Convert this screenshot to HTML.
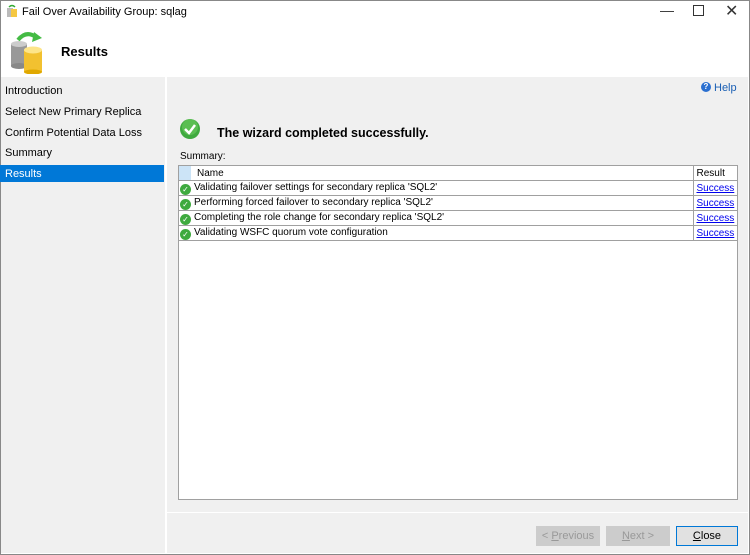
<!DOCTYPE html><html><head><style>
body{margin:0;width:750px;height:555px;overflow:hidden;font-family:"Liberation Sans",sans-serif;font-size:11px;color:#000;position:relative;background:#f0f0f0}
.a{position:absolute}
.nav{left:5px;font-size:11px}
td{font-size:10px;line-height:13px;padding:0 0 0 3px;height:13px;border-bottom:1px solid #a0a0a0;white-space:nowrap;overflow:hidden}
a{color:#0000ee;text-decoration:underline}
.btn{height:18px;border:1px solid #ccc;background:#ccc;color:#999;text-align:center;line-height:18px;font-size:11px}
.ck{display:inline-block;width:11px;height:11px;border-radius:50%;background:#3faa3f;vertical-align:-2px;margin-right:3px;color:#fff;font-size:8px;text-align:center;line-height:11px}
</style></head><body>
<div class="a" style="left:0;top:0;width:748px;height:553px;border:1px solid #888;background:#fff"></div>
<svg class="a" style="left:6px;top:4px" width="12" height="14"><rect x="1" y="4" width="6" height="9" fill="#bbb"/><rect x="5" y="5" width="6" height="8" fill="#f5c842"/><path d="M3 3 Q6 0 9 3" stroke="#3a3" stroke-width="1.5" fill="none"/></svg>
<div class="a" style="left:22px;top:6px;font-size:11px">Fail Over Availability Group: sqlag</div>
<div class="a" style="left:660px;top:2px;font-size:14px;color:#333">&#8212;</div>
<div class="a" style="left:693px;top:5px;width:9px;height:9px;border:1px solid #333"></div>
<div class="a" style="left:725px;top:1px;font-size:16px;color:#333">&#x2715;</div>
<svg class="a" style="left:8px;top:28px" width="40" height="46">
<path d="M10 12 Q18 2 28 9" stroke="#4b4" stroke-width="4" fill="none"/><path d="M26 4 L34 10 L24 14Z" fill="#4b4"/>
<rect x="3" y="16" width="16" height="22" fill="#999"/><ellipse cx="11" cy="16" rx="8" ry="3" fill="#ccc"/><ellipse cx="11" cy="38" rx="8" ry="3" fill="#888"/>
<rect x="16" y="22" width="18" height="22" fill="#f2c130"/><ellipse cx="25" cy="22" rx="9" ry="3.5" fill="#fde58a"/><ellipse cx="25" cy="44" rx="9" ry="2.5" fill="#e0a800"/></svg>
<div class="a" style="left:61px;top:44px;font-size:13px;font-weight:bold">Results</div>
<div class="a" style="left:1px;top:77px;width:164px;height:476px;background:#f0f0f0"></div>
<div class="a" style="left:167px;top:77px;width:581px;height:476px;background:#f0f0f0"></div>
<div class="a" style="left:167px;top:512px;width:581px;height:1px;background:#fff"></div>
<div class="a nav" style="top:85px">Introduction</div>
<div class="a nav" style="top:106px">Select New Primary Replica</div>
<div class="a nav" style="top:127px">Confirm Potential Data Loss</div>
<div class="a nav" style="top:147px">Summary</div>
<div class="a" style="left:0;top:165px;width:164px;height:17px;background:#0078d7"></div>
<div class="a nav" style="top:168px;color:#fff">Results</div>
<div class="a" style="left:701px;top:82px;width:10px;height:10px;border-radius:50%;background:#2a6fd0;color:#fff;font-size:8px;text-align:center;line-height:10px;font-weight:bold">?</div>
<div class="a" style="left:714px;top:82px;color:#1a5fb4">Help</div>
<svg class="a" style="left:179px;top:118px" width="22" height="22"><circle cx="11" cy="11" r="10" fill="#3faa3f"/><circle cx="11" cy="9" r="8" fill="#6ccb5f" opacity=".6"/><path d="M6 11 L10 15 L16 7" stroke="#fff" stroke-width="2.5" fill="none"/></svg>
<div class="a" style="left:217px;top:126px;font-size:12.5px;font-weight:bold">The wizard completed successfully.</div>
<div class="a" style="left:180px;top:151px;font-size:10px">Summary:</div>
<div class="a" style="left:178px;top:165px;width:558px;height:333px;border:1px solid #a0a0a0;background:#fff">
<table style="border-collapse:collapse;width:100%;table-layout:fixed"><col style="width:12px"><col><col style="width:44px">
<tr><td style="background:#cce4f7;padding:0;height:14px"></td><td style="padding-left:6px">Name</td><td style="border-left:1px solid #a0a0a0">Result</td></tr>
<tr><td colspan="2" style="padding-left:1px"><span class="ck">✓</span>Validating failover settings for secondary replica 'SQL2'</td><td style="border-left:1px solid #a0a0a0"><a>Success</a></td></tr>
<tr><td colspan="2" style="padding-left:1px"><span class="ck">✓</span>Performing forced failover to secondary replica 'SQL2'</td><td style="border-left:1px solid #a0a0a0"><a>Success</a></td></tr>
<tr><td colspan="2" style="padding-left:1px"><span class="ck">✓</span>Completing the role change for secondary replica 'SQL2'</td><td style="border-left:1px solid #a0a0a0"><a>Success</a></td></tr>
<tr><td colspan="2" style="padding-left:1px"><span class="ck">✓</span>Validating WSFC quorum vote configuration</td><td style="border-left:1px solid #a0a0a0"><a>Success</a></td></tr>
</table></div>
<div class="a btn" style="left:536px;top:526px;width:62px">&lt; <u>P</u>revious</div>
<div class="a btn" style="left:606px;top:526px;width:62px"><u>N</u>ext &gt;</div>
<div class="a btn" style="left:676px;top:526px;width:60px;background:#e1e1e1;border:1px solid #0078d7;color:#000"><u>C</u>lose</div>
</body></html>
